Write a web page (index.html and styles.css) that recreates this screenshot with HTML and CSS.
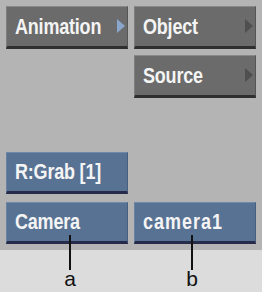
FILE: index.html
```html
<!DOCTYPE html>
<html lang="en">
<head>
    <meta charset="UTF-8">
    <title>Camera menu</title>
    <link rel="stylesheet" href="styles.css">
</head>
<body>
    <div class="screen">
        <div class="panel">
            <div class="row">
                <div class="btn gray"><span>Animation</span><i class="arrow active"></i></div>
                <div class="btn gray"><span>Object</span><i class="arrow"></i></div>
            </div>
            <div class="row">
                <div class="cell"></div>
                <div class="btn gray"><span>Source</span><i class="arrow"></i></div>
            </div>
            <div class="spacer"></div>
            <div class="row low">
                <div class="btn blue"><span>R:Grab [1]</span></div>
            </div>
            <div class="row low last">
                <div class="btn blue"><span>Camera</span></div>
                <div class="btn blue"><span class="spaced">camera1</span></div>
            </div>
        </div>
        <div class="callouts">
            <div class="label">a</div>
            <div class="label">b</div>
        </div>
        <div class="line line-a"></div>
        <div class="line line-b"></div>
    </div>
</body>
</html>
```

FILE: styles.css
```css
body {
    margin: 0;
    background-color: #dcdcdc;
    font-family: "Liberation Sans", Arial, sans-serif;
}
.screen {
    position: relative;
    width: 262px;
    height: 292px;
}
.panel {
    background-color: #b4b4b4;
    height: 250px;
    padding: 6px 6px 0;
    box-sizing: border-box;
    display: flex;
    flex-direction: column;
    gap: 6px;
}
.row {
    display: flex;
    gap: 6px;
    height: 43px;
}
.row.low {
    height: 42px;
}
.row.last {
    margin-top: 2px;
}
.spacer {
    height: 42px;
}
.cell {
    width: 122px;
}
.btn {
    width: 122px;
    box-sizing: border-box;
    display: flex;
    align-items: center;
    justify-content: space-between;
    padding: 0 2px 0 8px;
    color: #f4f4f4;
    font-size: 18px;
    font-weight: bold;
    letter-spacing: -0.2px;
}
.btn span {
    display: inline-block;
    transform: scaleY(1.2);
    transform-origin: left center;
    margin-top: 1px;
}
.btn span.spaced {
    letter-spacing: 1px;
}
.gray {
    background-color: #6b6b6b;
    border-top: 1px solid #888;
    border-left: 1px solid #7e7e7e;
    border-right: 1px solid #555;
    border-bottom: 3px solid #2f2f2f;
}
.blue {
    background-color: #587293;
    border-top: 1px solid #7189a8;
    border-left: 1px solid #6a82a2;
    border-right: 1px solid #475e7c;
    border-bottom: 3px solid #262b4a;
}
.arrow {
    width: 0;
    height: 0;
    border-top: 7px solid transparent;
    border-bottom: 7px solid transparent;
    border-left: 8px solid #4f4f4f;
    margin-top: -1px;
}
.arrow.active {
    border-left-color: #8aa6cc;
}
.callouts {
    display: flex;
    height: 42px;
    padding-top: 19px;
    box-sizing: border-box;
}
.label {
    width: 122px;
    text-align: center;
    font-size: 21px;
    line-height: 20px;
    color: #111;
}
.label:first-child {
    margin-left: 9px;
}
.line {
    position: absolute;
    top: 235px;
    width: 2px;
    height: 35px;
    background-color: #111;
}
.line-a {
    left: 69px;
}
.line-b {
    left: 191px;
}
```
